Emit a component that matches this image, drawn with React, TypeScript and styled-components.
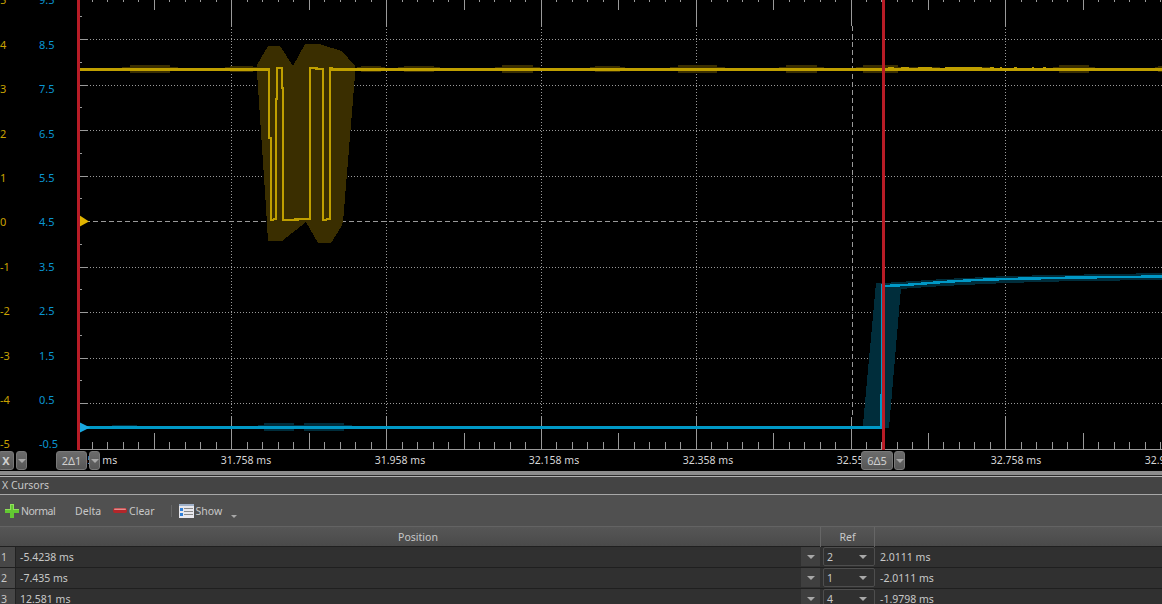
import React from "react";
import styled, { createGlobalStyle } from "styled-components";

const UI_FONT = `"Noto Sans", "Liberation Sans", sans-serif`;

const GlobalStyle = createGlobalStyle`
  html, body {
    margin: 0;
    padding: 0;
    background: #000;
    overflow: hidden;
  }
`;

const Page = styled.div`
  width: 1162px;
  height: 604px;
  overflow: hidden;
  display: flex;
  flex-direction: column;
  font-family: ${UI_FONT};
  font-size: 10.5px;
  background: #000;
`;

const Scope = styled.div`
  height: 450px;
  flex: none;
  display: flex;
`;

const Gutter = styled.div`
  width: 77px;
  flex: none;
  display: grid;
  grid-template-columns: 39px 38px;
  overflow: hidden;
`;

const YColumn = styled.div<{ $color: string }>`
  display: flex;
  flex-direction: column;
  margin-top: -21.6px;
  color: ${(p) => p.$color};
  font-size: 11px;
`;

const YLabel = styled.div`
  height: 44.4px;
  flex: none;
  line-height: 44.4px;
`;

const Plot = styled.svg`
  width: 1085px;
  height: 450px;
  flex: none;
  display: block;
`;

const AxisRow = styled.div`
  position: relative;
  height: 21px;
  flex: none;
  display: flex;
  padding-left: 15px;
  overflow: hidden;
  color: #d6d6d6;
`;

const AxisLabel = styled.div`
  width: 154px;
  flex: none;
  text-align: center;
  white-space: nowrap;
  line-height: 20px;
`;

const Badge = styled.div<{ $left: number; $width: number }>`
  position: absolute;
  top: 1px;
  left: ${(p) => p.$left}px;
  width: ${(p) => p.$width}px;
  height: 19px;
  box-sizing: border-box;
  display: flex;
  align-items: center;
  justify-content: center;
  border: 1px solid #787878;
  border-radius: 3px;
  background: linear-gradient(#6c6c6c, #565656);
  color: #cfcfcf;
  font-size: 11px;
`;

const Arrow = styled.span`
  width: 0;
  height: 0;
  border-left: 4px solid transparent;
  border-right: 4px solid transparent;
  border-top: 4px solid #a8a8a8;
`;

const Splitter = styled.div`
  height: 6px;
  flex: none;
  box-sizing: border-box;
  background: #8c8c8c;
  border-bottom: 1px solid #b4b4b4;
  box-shadow: inset 0 -1px 0 #2c2c2c;
`;

const Panel = styled.div`
  flex: 1;
  min-height: 0;
  display: flex;
  flex-direction: column;
  background: #444;
  color: #c8c8c8;
`;

const PanelTitle = styled.div`
  height: 18px;
  flex: none;
  box-sizing: border-box;
  padding-left: 2px;
  line-height: 16px;
  font-size: 10.5px;
  background: #444;
  border-bottom: 1px solid #a8a8a8;
`;

const Toolbar = styled.div`
  height: 32px;
  flex: none;
  box-sizing: border-box;
  display: flex;
  align-items: center;
  padding-left: 5px;
  background: #505050;
  border-bottom: 1px solid #636363;
`;

const ToolItem = styled.div<{ $gap?: number; $tight?: boolean }>`
  display: flex;
  align-items: center;
  gap: 2px;
  margin-right: ${(p) => p.$gap ?? 0}px;
  letter-spacing: ${(p) => (p.$tight ? "-0.5px" : "normal")};
`;

const ToolSeparator = styled.div`
  width: 1px;
  height: 12px;
  margin-right: 7px;
  background: #666;
`;

const ToolCaret = styled(Arrow)`
  margin: 12px 0 0 9px;
  border-left-width: 3px;
  border-right-width: 3px;
  border-top-width: 3px;
`;

const TableHead = styled.div`
  height: 20px;
  flex: none;
  box-sizing: border-box;
  display: grid;
  grid-template-columns: 16px 805px 54px 1fr;
  background: linear-gradient(#565656, #4a4a4a);
  border-bottom: 1px solid #202020;
`;

const HeadCell = styled.div`
  text-align: center;
  line-height: 21px;
  border-right: 1px solid #666;
  &:first-child,
  &:last-child {
    border-right: none;
  }
`;

const Row = styled.div`
  height: 21px;
  flex: none;
  box-sizing: border-box;
  display: grid;
  grid-template-columns: 16px 805px 54px 1fr;
  background: #303030;
  border-bottom: 1px solid #1f1f1f;
  line-height: 20px;
`;

const RowIndex = styled.div`
  background: #474747;
  border-right: 1px solid #222;
  padding-left: 1px;
`;

const ValueCell = styled.div`
  display: flex;
  justify-content: space-between;
  padding-left: 4px;
  white-space: nowrap;
`;

const DropButton = styled.div`
  width: 19px;
  height: 19px;
  margin-right: 1px;
  display: flex;
  align-items: center;
  justify-content: center;
  background: #3f3f3f;
`;

const RefSelect = styled.div`
  height: 19px;
  box-sizing: border-box;
  margin: 0 0 0 2px;
  padding: 0 7px 0 3px;
  display: flex;
  align-items: center;
  justify-content: space-between;
  border: 1px solid #4e4e4e;
  border-radius: 2px;
`;

const DeltaCell = styled.div`
  padding-left: 5px;
  white-space: nowrap;
`;

const YELLOW = "#bf9f00";
const YELLOW_FILL = "#3a2e00";
const BLUE = "#0098c6";
const BLUE_FILL = "#002d3b";
const GRID = "#9a9a9a";
const RED = "#b81c26";

// plot coordinates: the svg starts at x=77 of the page
const px = (x: number) => x - 77;
const pts = (list: number[][]) => list.map(([x, y]) => `${px(x)},${y}`).join(" ");

const minorTicks = Array.from({ length: 71 }, (_, i) => 77 + i * 15.48);
const majorTicks = Array.from({ length: 14 }, (_, i) => 77 + i * 77.4);
const gridX = [231.8, 386.6, 541.4, 696.2, 1005.8];
const gridY = [39.5, 85.5, 130.5, 176.5, 267.5, 312.5, 358.5, 403.5];
const sideTicks = [16.5, 62.5, 107.5, 153.5, 198.5, 244.5, 289.5, 335.5, 380.5, 426.5];

const yellowRipples = [
  [122, 178, 4], [225, 258, 3], [357, 385, 3], [398, 440, 3],
  [495, 540, 4], [590, 625, 3], [670, 725, 4], [779, 824, 4], [856, 905, 4],
  [905, 940, 2], [973, 990, 2], [1053, 1095, 4], [1155, 1175, 3],
];

const blueRipples = [
  [112, 137, 2], [258, 300, 4], [296, 352, 4],
];

const yellowTrace = [
  [269, 69], [269, 138], [271, 138], [271, 220], [276, 219], [276, 99], [277, 99],
  [277, 68], [282, 68], [282, 88], [283, 88], [283, 220], [310, 219], [310, 68], [323, 69],
  [323, 220], [330, 219], [330, 68], [335, 69],
];

const yellowEnvelope = [
  [257, 65], [268, 46], [280, 46], [293, 66], [305, 44], [319, 44], [342, 51], [355, 66], [355, 75],
  [343, 222], [341, 227], [331, 243], [318, 243], [306, 222], [282, 241], [268, 241], [266, 207], [257, 73],
];

const blueTrace = [
  [881, 427], [881, 395], [882, 395], [882, 285], [885, 286], [905, 285], [943, 282],
  [975, 280], [1007, 279], [1077, 277.5], [1162, 276.5],
];

const blueEnvelope = [
  [876, 283], [884, 283], [901, 288], [889, 428], [863, 428], [863, 424],
];

const blueTail = [
  [884, 283], [943, 279], [1007, 276], [1162, 273], [1162, 280], [1077, 281], [1007, 283], [943, 286], [900, 289],
];

const noiseBits = [[888, 6], [901, 8], [918, 14], [945, 26], [970, 12], [990, 4], [1000, 2], [1014, 3], [1032, 2], [1043, 3]];

// stepped blob round a trace, the scope draws these aliased
function Ripple({ a, b, h, y, fill }: { a: number; b: number; h: number; y: number; fill: string }) {
  const inset = (b - a) * 0.15;
  return (
    <g fill={fill} shapeRendering="crispEdges">
      <rect x={px(a)} y={y - 2} width={b - a} height="4" />
      <rect x={px(a + inset)} y={y - h} width={b - a - inset * 2} height={h * 2} />
    </g>
  );
}

function Waveforms() {
  return (
    <Plot viewBox="0 0 1085 450">
      <g stroke={GRID} strokeWidth="1" shapeRendering="crispEdges">
        {minorTicks.map((x) => (
          <React.Fragment key={x}>
            <line x1={px(x)} x2={px(x)} y1="0" y2="2" />
            <line x1={px(x)} x2={px(x)} y1="442" y2="449" />
          </React.Fragment>
        ))}
        {majorTicks.map((x, i) => (
          <React.Fragment key={x}>
            <line x1={px(x)} x2={px(x)} y1="0" y2={i % 2 ? 10 : 26} />
            <line x1={px(x)} x2={px(x)} y1={i % 2 ? 433 : 417} y2="449" />
          </React.Fragment>
        ))}
        {gridX.map((x) => (
          <line key={x} x1={px(x)} x2={px(x)} y1="26" y2="417" strokeDasharray="1 2" />
        ))}
        <line x1={px(852)} x2={px(852)} y1="26" y2="417" strokeDasharray="5 3" />
        {gridY.map((y) => (
          <React.Fragment key={y}>
            <line x1="0" x2="10" y1={y} y2={y} />
            <line x1="10" x2="1085" y1={y} y2={y} strokeDasharray="1 2" />
          </React.Fragment>
        ))}
        <line x1="0" x2="1085" y1="221.5" y2="221.5" strokeDasharray="5 3" />
        {sideTicks.map((y) => (
          <line key={y} x1="0" x2="5" y1={y} y2={y} />
        ))}
        <line x1="0" x2="1085" y1="449.5" y2="449.5" />
      </g>

      <polygon points={pts(yellowEnvelope)} fill={YELLOW_FILL} shapeRendering="crispEdges" />
      {yellowRipples.map(([a, b, h]) => (
        <Ripple key={a} a={a} b={b} h={h} y={69} fill={YELLOW_FILL} />
      ))}
      <polyline points={pts(yellowTrace)} fill="none" stroke={YELLOW} strokeWidth="2.2" shapeRendering="crispEdges" />
      <g fill={YELLOW} shapeRendering="crispEdges">
        <rect x="0" y="68" width={px(270)} height="3" />
        <rect x={px(330)} y="68" width={1162 - 330} height="3" />
        {noiseBits.map(([x, w]) => (
          <rect key={x} x={px(x)} y="67" width={w} height="1" />
        ))}
      </g>

      <polygon points={pts(blueEnvelope)} fill={BLUE_FILL} shapeRendering="crispEdges" />
      <polygon points={pts(blueTail)} fill={BLUE_FILL} shapeRendering="crispEdges" />
      {blueRipples.map(([a, b, h]) => (
        <Ripple key={a} a={a} b={b} h={h} y={427} fill={BLUE_FILL} />
      ))}
      <rect x="0" y="426" width={px(882)} height="3" fill={BLUE} shapeRendering="crispEdges" />
      <polyline points={pts(blueTrace)} fill="none" stroke={BLUE} strokeWidth="2.5" strokeLinejoin="bevel" shapeRendering="crispEdges" />

      <polygon points="2,215 12,221.5 2,227" fill="#e0b400" />
      <polygon points="2,422 13,427.5 2,433" fill="#1aa8e0" />

      <rect x="0" y="0" width="3" height="450" fill={RED} />
      <rect x={px(882)} y="0" width="3" height="450" fill={RED} />
    </Plot>
  );
}

function PlusIcon() {
  return (
    <svg width="14" height="14" viewBox="0 0 14 14">
      <path d="M5 0h4v5h5v4H9v5H5V9H0V5h5z" fill="#62c832" />
      <path d="M5 0h4v5h5v1H8V1H6v5H0V5h5z" fill="#8fe05a" />
    </svg>
  );
}

function MinusIcon() {
  return (
    <svg width="14" height="6" viewBox="0 0 14 6">
      <rect x="0" y="0" width="14" height="5" rx="2" fill="#b3262a" />
      <rect x="1" y="0.5" width="12" height="1.5" rx="0.7" fill="#e58a8a" />
    </svg>
  );
}

function ShowIcon() {
  return (
    <svg width="15" height="14" viewBox="0 0 15 14" shapeRendering="crispEdges">
      <rect width="15" height="14" fill="#e8e8ee" />
      <rect y="0" width="15" height="2" fill="#9fb0c8" />
      <rect x="1" y="4" width="3" height="3" fill="#2f7fd8" />
      <rect x="1" y="9" width="3" height="3" fill="#2f7fd8" />
      <rect x="5" y="4" width="9" height="1" fill="#8a8a8a" />
      <rect x="5" y="7" width="9" height="1" fill="#8a8a8a" />
      <rect x="5" y="10" width="9" height="1" fill="#8a8a8a" />
    </svg>
  );
}

const cursorRows = [
  { id: 1, position: "-5.4238 ms", ref: 2, delta: "2.0111 ms" },
  { id: 2, position: "-7.435 ms", ref: 1, delta: "-2.0111 ms" },
  { id: 3, position: "12.581 ms", ref: 4, delta: "-1.9798 ms" },
];

const axisLabels = ["31.558", "31.758", "31.958", "32.158", "32.358", "32.558", "32.758", "32.958"];
const yellowLabels = ["5", "4", "3", "2", "1", "0", "-1", "-2", "-3", "-4", "-5"];
const blueLabels = ["9.5", "8.5", "7.5", "6.5", "5.5", "4.5", "3.5", "2.5", "1.5", "0.5", "-0.5"];

export default function App() {
  return (
    <Page>
      <GlobalStyle />
      <Scope>
        <Gutter>
          <YColumn $color="#c9a200">
            {yellowLabels.map((l) => (
              <YLabel key={l}>{l}</YLabel>
            ))}
          </YColumn>
          <YColumn $color="#0a96d2">
            {blueLabels.map((l) => (
              <YLabel key={l}>{l}</YLabel>
            ))}
          </YColumn>
        </Gutter>
        <Waveforms />
      </Scope>

      <AxisRow>
        {axisLabels.map((l) => (
          <AxisLabel key={l}>{l} ms</AxisLabel>
        ))}
        <Badge $left={-2} $width={16}><b>X</b></Badge>
        <Badge $left={16} $width={11}><Arrow /></Badge>
        <Badge $left={56} $width={31}>2Δ1</Badge>
        <Badge $left={89} $width={11}><Arrow /></Badge>
        <Badge $left={861} $width={32}>6Δ5</Badge>
        <Badge $left={894} $width={11}><Arrow /></Badge>
      </AxisRow>
      <Splitter />

      <Panel>
        <PanelTitle>X Cursors</PanelTitle>
        <Toolbar>
          <ToolItem $gap={20} $tight><PlusIcon />Normal</ToolItem>
          <ToolItem $gap={12}>Delta</ToolItem>
          <ToolItem $gap={16}><MinusIcon />Clear</ToolItem>
          <ToolSeparator />
          <ToolItem><ShowIcon />Show</ToolItem>
          <ToolCaret />
        </Toolbar>
        <TableHead>
          <HeadCell />
          <HeadCell>Position</HeadCell>
          <HeadCell>Ref</HeadCell>
          <HeadCell />
        </TableHead>
        {cursorRows.map((r) => (
          <Row key={r.id}>
            <RowIndex>{r.id}</RowIndex>
            <ValueCell>
              {r.position}
              <DropButton><Arrow /></DropButton>
            </ValueCell>
            <RefSelect>
              {r.ref}
              <Arrow />
            </RefSelect>
            <DeltaCell>{r.delta}</DeltaCell>
          </Row>
        ))}
      </Panel>
    </Page>
  );
}
